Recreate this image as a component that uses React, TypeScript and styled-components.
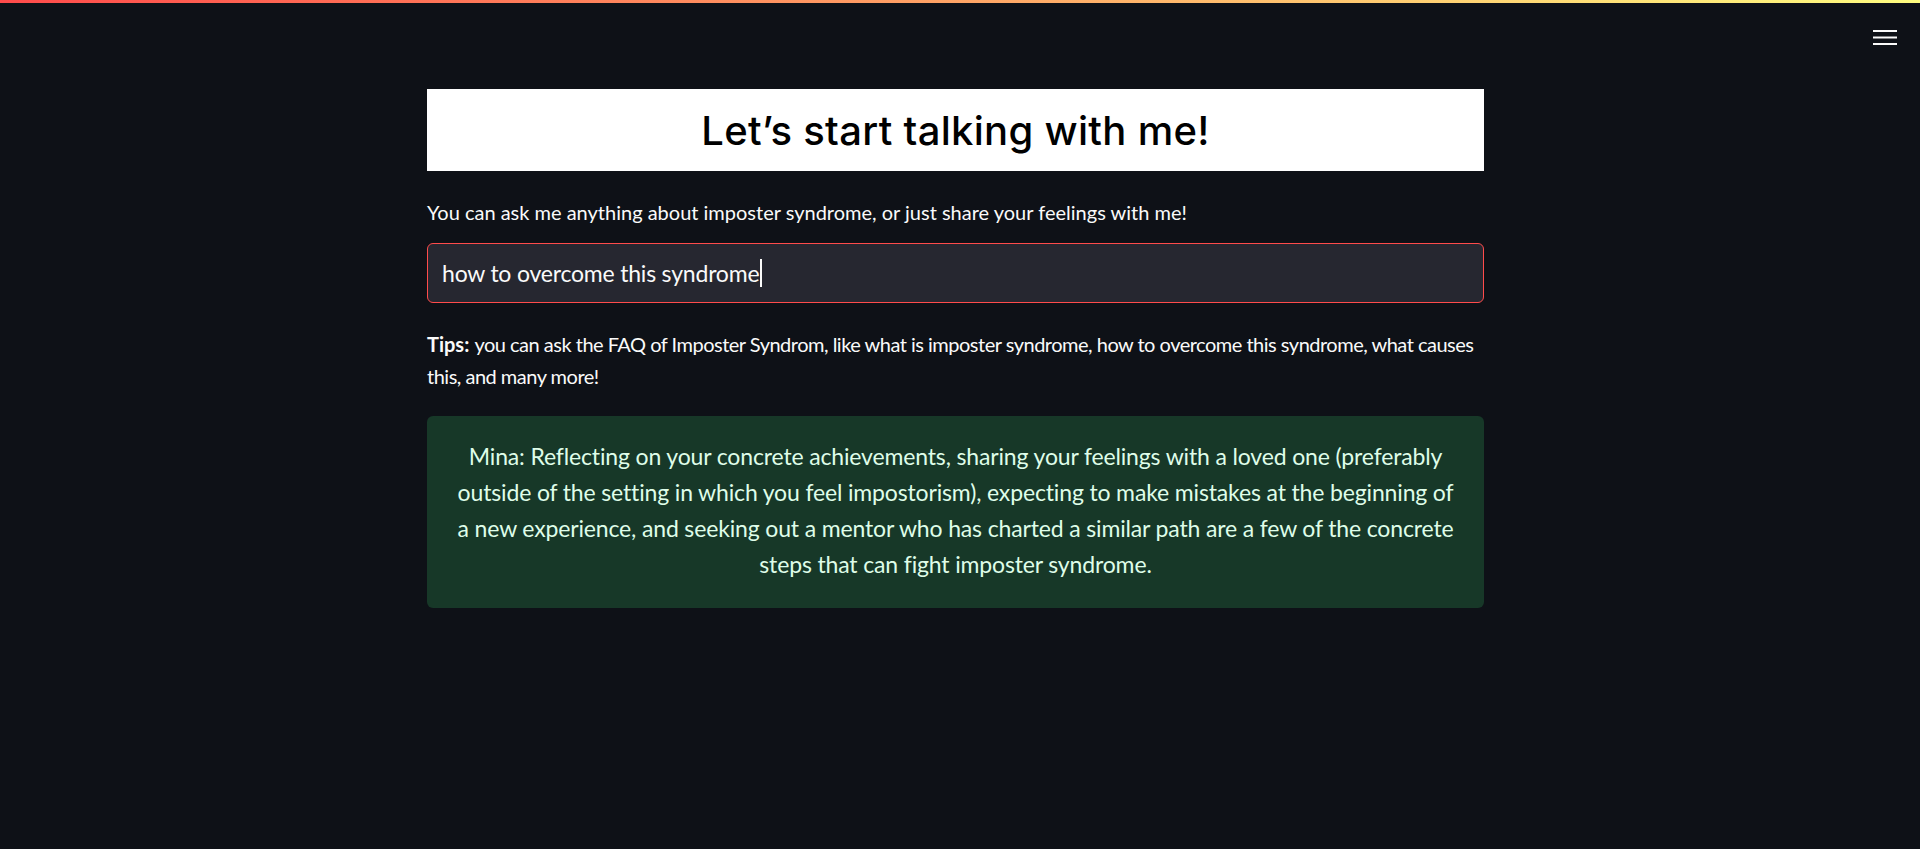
import React from 'react';
import styled, { createGlobalStyle } from 'styled-components';

const GlobalStyle = createGlobalStyle`
  html, body {
    margin: 0;
    padding: 0;
    background-color: #0e1117;
  }
  body {
    font-family: Lato, "Noto Sans", sans-serif;
    color: #fafafa;
  }
`;

const AppShell = styled.div`
  position: relative;
  min-height: 100vh;
  background-color: #0e1117;
  display: flex;
  flex-direction: column;
`;

const Decoration = styled.div`
  height: 3px;
  width: 100%;
  background-image: linear-gradient(90deg, rgb(255, 75, 75), rgb(255, 253, 128));
`;

// floating header button, sits over the page like Streamlit's toolbar
const MenuButton = styled.button`
  position: absolute;
  top: 26px;
  right: 23px;
  background: none;
  border: none;
  padding: 0;
  width: 24px;
  height: 24px;
  display: flex;
  align-items: center;
  justify-content: center;
  cursor: pointer;
  color: #fafafa;
`;

const Main = styled.main`
  display: flex;
  justify-content: center;
  padding: 86px 9px 0 0;
`;

const Block = styled.div`
  width: 1057px;
  display: flex;
  flex-direction: column;
`;

const TitleCard = styled.div`
  background-color: #ffffff;
  height: 82px;
  display: flex;
  align-items: center;
  justify-content: center;
`;

const Title = styled.h1`
  margin: 0;
  font-family: Inter, "Noto Sans", sans-serif;
  font-weight: 500;
  font-size: 40px;
  color: #000000;
  letter-spacing: 0.3px;
`;

const Paragraph = styled.p`
  margin: 25px 0 0;
  font-size: 20px;
  line-height: 32px;
`;

const InputBox = styled.div`
  margin-top: 15px;
  height: 60px;
  box-sizing: border-box;
  background-color: #262730;
  border: 1px solid rgb(255, 75, 75);
  border-radius: 6px;
  display: flex;
  align-items: center;
  padding: 0 14px;
`;

const InputText = styled.span`
  font-size: 23px;
  letter-spacing: -0.2px;
  color: #fafafa;
  line-height: 1;
`;

const Caret = styled.span`
  display: inline-block;
  width: 1.5px;
  height: 28px;
  background-color: #fafafa;
  margin-left: 1px;
`;

const Tips = styled.p`
  margin: 25px 0 0;
  font-size: 20px;
  line-height: 32px;
  letter-spacing: -0.5px;

  strong {
    font-weight: 700;
    letter-spacing: 0;
    margin-right: 1px;
  }
`;

const Answer = styled.div`
  margin-top: 24px;
  background-color: #173828;
  color: #dffde9;
  border-radius: 6px;
  padding: 22px 12px 26px;
  text-align: center;
  font-size: 23px;
  letter-spacing: -0.15px;
  line-height: 36px;
`;

const HamburgerIcon: React.FC = () => (
  <svg width="24" height="16" viewBox="0 0 24 16" fill="currentColor">
    <rect x="0" y="0" width="24" height="2" />
    <rect x="0" y="6.5" width="24" height="2" />
    <rect x="0" y="13" width="24" height="2" />
  </svg>
);

const App: React.FC = () => {
  return (
    <AppShell>
      <GlobalStyle />
      <Decoration />
      <MenuButton aria-label="Main menu">
        <HamburgerIcon />
      </MenuButton>
      <Main>
        <Block>
          <TitleCard>
            <Title>Let’s start talking with me!</Title>
          </TitleCard>
          <Paragraph>
            You can ask me anything about imposter syndrome, or just share your feelings with me!
          </Paragraph>
          <InputBox>
            <InputText>how to overcome this syndrome</InputText>
            <Caret />
          </InputBox>
          <Tips>
            <strong>Tips:</strong> you can ask the FAQ of Imposter Syndrom, like what is imposter
            syndrome, how to overcome this syndrome, what causes this, and many more!
          </Tips>
          <Answer>
            Mina: Reflecting on your concrete achievements, sharing your feelings with a loved one
            (preferably
            <br />
            outside of the setting in which you feel impostorism), expecting to make mistakes at the
            beginning of
            <br />
            a new experience, and seeking out a mentor who has charted a similar path are a few of the
            concrete
            <br />
            steps that can fight imposter syndrome.
          </Answer>
        </Block>
      </Main>
    </AppShell>
  );
};

export default App;
